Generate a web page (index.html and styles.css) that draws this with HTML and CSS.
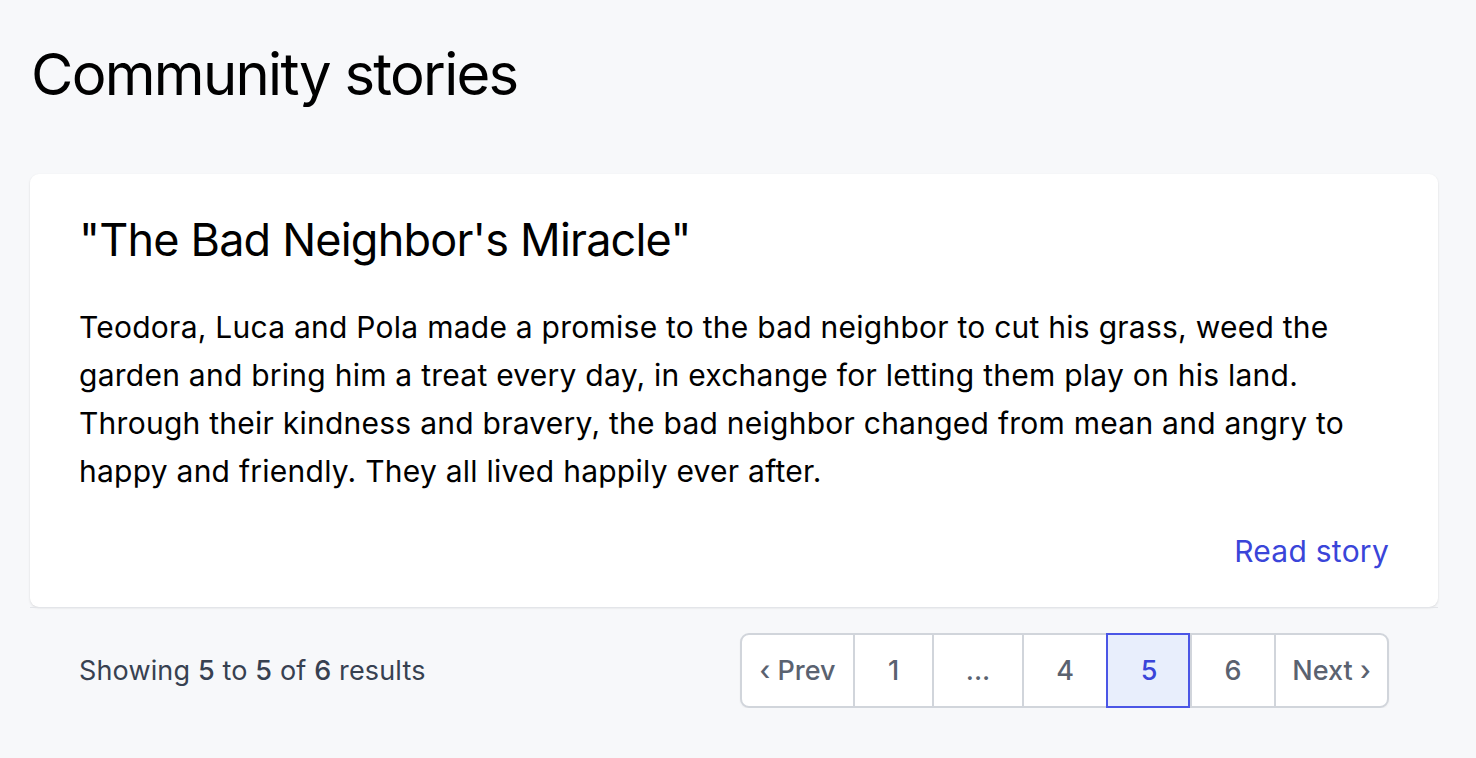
FILE: index.html
```html
<!DOCTYPE html>
<html lang="en">
<head>
<meta charset="utf-8">
<title>Community stories</title>
<link rel="stylesheet" href="styles.css">
</head>
<body>
<main class="page">
  <h1 class="page-title">Community stories</h1>
  <article class="card">
    <h2 class="card-title">"The Bad Neighbor's Miracle"</h2>
    <p class="card-text">Teodora, Luca and Pola made a promise to the bad neighbor to cut his grass, weed the garden and bring him a treat every day, in exchange for letting them play on his land. Through their kindness and bravery, the bad neighbor changed from mean and angry to happy and friendly. They all lived happily ever after.</p>
    <div class="card-actions"><a class="read-link" href="#">Read story</a></div>
  </article>
  <nav class="pager-bar">
    <p class="pager-info">Showing <span class="num">5</span> to <span class="num">5</span> of <span class="num">6</span> results</p>
    <div class="pager">
      <a class="pg pg-prev" href="#">‹ Prev</a>
      <a class="pg pg-1" href="#">1</a>
      <span class="pg pg-dots">...</span>
      <a class="pg pg-n" href="#">4</a>
      <a class="pg pg-n active" href="#">5</a>
      <a class="pg pg-n" href="#">6</a>
      <a class="pg pg-next" href="#">Next ›</a>
    </div>
  </nav>
</main>
</body>
</html>
```

FILE: styles.css
```css
* { box-sizing: border-box; }
html, body { margin: 0; padding: 0; }
body {
  background: #f7f8fa;
  font-family: Inter, "Noto Sans", "Liberation Sans", sans-serif;
  color: #000;
}
.page {
  padding: 38px 38px 0 30px;
}
.page-title {
  margin: 0 0 64px 1px;
  font-size: 58px;
  line-height: 72px;
  font-weight: 400;
  letter-spacing: -1.7px;
}
.card {
  background: #fff;
  border-radius: 9px;
  box-shadow: 0 1px 3px rgba(0,0,0,0.08), 0 1px 2px rgba(0,0,0,0.05);
  padding: 36px 49px 32px 49px;
}
.card-title {
  margin: 0 0 33px 0;
  font-size: 45px;
  line-height: 60px;
  font-weight: 400;
  letter-spacing: -0.8px;
}
.card-text {
  margin: 0;
  font-size: 30px;
  line-height: 48px;
  letter-spacing: 0.25px;
}
.card-actions {
  display: flex;
  justify-content: flex-end;
  margin-top: 32px;
}
.read-link {
  color: #3a45d9;
  font-size: 30px;
  line-height: 48px;
  letter-spacing: 0.25px;
  text-decoration: none;
}
.pager-bar {
  border-top: 1px solid #e3e5e9;
  display: flex;
  align-items: center;
  justify-content: space-between;
  padding: 25px 49px 0 49px;
}
.pager-info {
  margin: 0;
  font-size: 27px;
  letter-spacing: 0.15px;
  color: #374151;
}
.pager-info .num { font-weight: 500; }
.pager {
  display: flex;
  height: 75px;
  border: 2px solid #d1d5db;
  border-radius: 9px;
  background: #fff;
  box-shadow: 0 1px 2px rgba(0,0,0,0.05);
}
.pg {
  display: flex;
  align-items: center;
  justify-content: center;
  font-size: 27px;
  font-weight: 500;
  color: #5a6270;
  text-decoration: none;
  border-left: 2px solid #d1d5db;
}
.pg-prev { border-left: none; width: 111px; }
.pg-1 { width: 79px; }
.pg-dots { width: 90px; }
.pg-n { width: 84px; }
.pg-next { width: 113px; }
.pg.active {
  background: #e8eefc;
  color: #3a45d9;
  outline: 2px solid #4b56e6;
  outline-offset: -2px;
  margin-top: -2px;
  margin-bottom: -2px;
  border-left: none;
  padding-left: 2px;
}
```
